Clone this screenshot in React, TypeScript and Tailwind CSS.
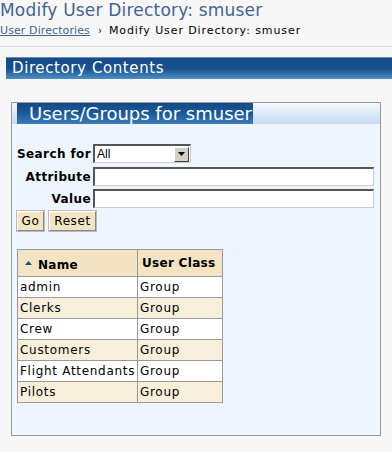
import React from "react";

const rows = [
  { name: "admin", cls: "Group" },
  { name: "Clerks", cls: "Group" },
  { name: "Crew", cls: "Group" },
  { name: "Customers", cls: "Group" },
  { name: "Flight Attendants", cls: "Group" },
  { name: "Pilots", cls: "Group" },
];

function TextInput() {
  return (
    <div className="h-[19px] w-[281px] bg-white border-t-2 border-l-2 border-t-[#555] border-l-[#555] border-r border-b border-r-[#ccc] border-b-[#ccc]" />
  );
}

export default function App() {
  return (
    <div className="w-[392px] h-[452px] overflow-hidden bg-[#f7f7f7] font-['DejaVu_Sans',Verdana,sans-serif] text-black">
      <h1 className="text-[17px] leading-[21px] tracking-[0.2px] text-[#3f6592]">Modify User Directory: smuser</h1>
      <div className="text-[11px] leading-[14px] mt-[3px] flex items-center">
        <span className="underline text-[#3f6592] tracking-[0.1px]">User Directories</span>
        <span className="ml-[8px] mr-[7px] text-[10px]">›</span>
        <span className="tracking-[0.9px]">Modify User Directory: smuser</span>
      </div>
      <div className="mt-[8px] h-[1px] bg-[#d9d9d9]" />

      <div className="ml-[6px] mt-[10px] h-[22px] flex items-center pl-[6px] text-white text-[15px] tracking-[0.6px] border-t border-t-[#6a8cb2] bg-gradient-to-b from-[#174a85] via-[#17518f] to-[#4d90c4]">
        Directory Contents
      </div>

      <div className="ml-[11px] mt-[23px] w-[370px] h-[334px] border border-[#999] bg-[#eef5ff]">
        <div className="h-[21px] pl-[5px] flex bg-gradient-to-b from-[#f4f8fd] to-[#c4daf2]">
          <div className="h-full flex items-center pl-[12px] pr-[1px] text-white text-[18px] leading-[21px] bg-gradient-to-b from-[#134a88] via-[#1a5a98] to-[#3a7cb8]">
            Users/Groups for smuser
          </div>
        </div>

        <div className="pl-[5px] mt-[20px] text-[12px] tracking-[0.6px]">
          <div className="flex items-center h-[19px]">
            <span className="w-[76px] text-right pr-[2px] font-bold tracking-[0.4px] whitespace-nowrap">Search for</span>
            <div className="h-[19px] w-[98px] bg-white border-t-2 border-l-2 border-t-[#555] border-l-[#555] border-r border-b border-r-[#ccc] border-b-[#ccc] flex items-center justify-between">
              <span className="pl-[2px] text-[12px] tracking-normal font-['Liberation_Sans',Arial,sans-serif]">All</span>
              <div className="w-[15px] h-[15px] mr-[1px] bg-[#d4d0c8] border border-t-white border-l-white border-r-[#404040] border-b-[#404040] flex items-center justify-center">
                <svg width="7" height="4" viewBox="0 0 7 4"><path d="M0 0h7L3.5 4z" fill="#000" /></svg>
              </div>
            </div>
          </div>
          <div className="flex items-center h-[19px] mt-[4px]">
            <span className="w-[76px] text-right pr-[2px] font-bold tracking-[0.4px]">Attribute</span>
            <TextInput />
          </div>
          <div className="flex items-center h-[19px] mt-[3px]">
            <span className="w-[76px] text-right pr-[2px] font-bold tracking-[0.4px]">Value</span>
            <TextInput />
          </div>
          <div className="flex mt-[3px] gap-[5px]">
            <div className="h-[20px] w-[27px] flex items-center justify-center bg-[#f3e4c4] border border-t-[#fff] border-l-[#fff] border-r-[#888] border-b-[#888] shadow-[0_0_0_1px_#bbb]">Go</div>
            <div className="h-[20px] w-[47px] flex items-center justify-center bg-[#f3e4c4] border border-t-[#fff] border-l-[#fff] border-r-[#888] border-b-[#888] shadow-[0_0_0_1px_#bbb]">Reset</div>
          </div>

          <table className="mt-[18px] border-collapse text-[12px] tracking-[0.7px]">
            <thead>
              <tr className="bg-[#f3e3c3] h-[27px]">
                <th className="w-[120px] border border-[#999] text-left font-bold pl-[7px] tracking-[0.3px]">
                  <span className="inline-flex items-center">
                    <svg width="7" height="4" viewBox="0 0 7 4" className="mr-[6px] mb-[5px]"><path d="M0 4L3.5 0L7 4z" fill="#1c4d86" /></svg>
                    Name
                  </span>
                </th>
                <th className="w-[85px] border border-[#999] text-left font-bold pl-[4px] tracking-[0.3px] whitespace-nowrap">User Class</th>
              </tr>
            </thead>
            <tbody>
              {rows.map((r, i) => (
                <tr key={r.name} className={i % 2 === 0 ? "bg-white h-[21px]" : "bg-[#f7efd9] h-[21px]"}>
                  <td className="border border-[#999] pl-[2px] leading-[19px] whitespace-nowrap">{r.name}</td>
                  <td className="border border-[#999] pl-[2px] leading-[19px]">{r.cls}</td>
                </tr>
              ))}
            </tbody>
          </table>
        </div>
      </div>
    </div>
  );
}
